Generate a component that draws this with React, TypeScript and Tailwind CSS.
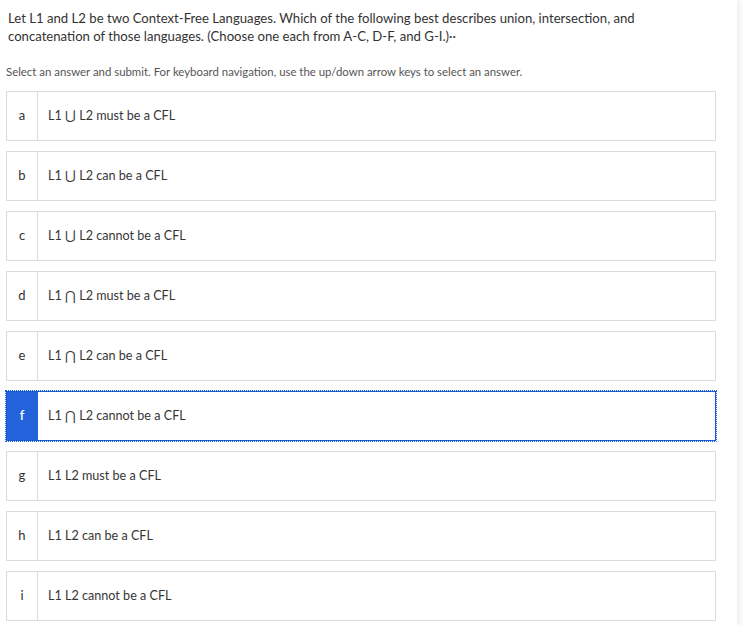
import React from "react";

const options = [
  { l: "a", t: "L1 \u22C3 L2 must be a CFL" },
  { l: "b", t: "L1 \u22C3 L2 can be a CFL" },
  { l: "c", t: "L1 \u22C3 L2 cannot be a CFL" },
  { l: "d", t: "L1 \u22C2 L2 must be a CFL" },
  { l: "e", t: "L1 \u22C2 L2 can be a CFL" },
  { l: "f", t: "L1 \u22C2 L2 cannot be a CFL", sel: true },
  { l: "g", t: "L1 L2 must be a CFL" },
  { l: "h", t: "L1 L2 can be a CFL" },
  { l: "i", t: "L1 L2 cannot be a CFL" },
];

export default function App() {
  return (
    <div className="min-h-[626px] bg-white" style={{ fontFamily: "Lato, 'Open Sans', sans-serif" }}>
      <div className="w-[737px] min-h-[626px] bg-white shadow-[3px_0_5px_rgba(0,0,0,0.07)]">
        <div className="pl-[8px] pt-[9px] pr-[100px] text-[13.15px] leading-[18px] text-[#333]">
          Let L1 and L2 be two Context-Free Languages. Which of the following best describes union, intersection, and concatenation of those languages. (Choose one each from A-C, D-F, and G-I.)··
        </div>
        <div className="pl-[6px] pt-[20px] text-[11.4px] leading-[14px] text-[#555]">
          Select an answer and submit. For keyboard navigation, use the up/down arrow keys to select an answer.
        </div>
        <div className="flex flex-col gap-[10px] pl-[6px] pt-[12px] w-[716px]">
          {options.map((o) =>
            o.sel ? (
              <div key={o.l} className="-ml-px w-[712px] h-[52px] -my-px border border-dotted border-[#1a5bd6] outline outline-1 outline-[#1a5bd6] outline-offset-[-2px] flex">
                <div className="w-[32px] bg-[#2462db] text-white flex items-center justify-center text-[13px] font-semibold">{o.l}</div>
                <div className="flex items-center pl-[10px] text-[12.6px] text-[#363636]">{o.t}</div>
              </div>
            ) : (
              <div key={o.l} className="h-[50px] border border-[#dcdcdc] flex">
                <div className="w-[31px] border-r border-[#dcdcdc] flex items-center justify-center text-[13px] text-[#333]">{o.l}</div>
                <div className="flex items-center pl-[10px] text-[12.6px] text-[#363636]">{o.t}</div>
              </div>
            )
          )}
        </div>
      </div>
    </div>
  );
}
